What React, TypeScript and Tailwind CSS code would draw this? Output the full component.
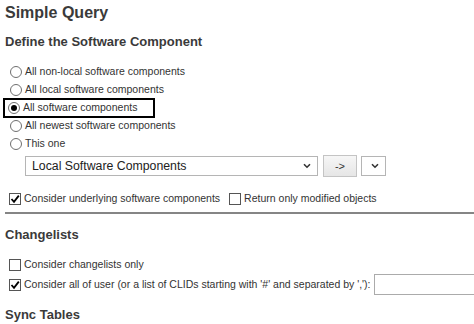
import React from 'react';

const Radio = ({ checked }: { checked?: boolean }) => (
  <span className="flex h-[12px] w-[12px] shrink-0 items-center justify-center rounded-full border border-[#6f6f6f] bg-white">
    {checked && <span className="h-[6px] w-[6px] rounded-full bg-black" />}
  </span>
);

const Checkbox = ({ checked }: { checked?: boolean }) => (
  <span className="flex h-[12px] w-[12px] shrink-0 items-center justify-center border border-[#555] bg-white">
    {checked && (
      <svg width="10" height="10" viewBox="0 0 10 10">
        <path d="M1.5 5 L4 7.8 L8.8 1.6" fill="none" stroke="#000" strokeWidth="1.8" />
      </svg>
    )}
  </span>
);

const Chevron = () => (
  <svg width="8" height="6" viewBox="0 0 8 6">
    <path d="M1 1.2 L4 4.2 L7 1.2" fill="none" stroke="#333" strokeWidth="1.6" />
  </svg>
);

const options = [
  'All non-local software components',
  'All local software components',
  'All software components',
  'All newest software components',
  'This one',
];

export default function App() {
  return (
    <div
      className="w-[474px] h-[324px] overflow-hidden bg-white text-[10.5px] text-[#333] whitespace-nowrap"
      style={{ fontFamily: '"Liberation Sans", Arial, sans-serif' }}
    >
      <div className="px-[5px] pt-[3px]">
        <h1 className="text-[16px] font-bold leading-[20px] text-[#3a3a3a]">Simple Query</h1>
        <h2 className="mt-[11px] text-[13px] font-bold leading-[16px] text-[#3a3a3a]">
          Define the Software Component
        </h2>

        <div className="mt-[13px] flex flex-col">
          {options.map((label, i) =>
            i === 2 ? (
              <div key={label} className="-ml-[2px] -my-[1px] flex h-[20px] w-[152px] items-center gap-[3px] border-2 border-black pl-[3px]">
                <Radio checked />
                <span>{label}</span>
              </div>
            ) : (
              <div key={label} className="flex h-[18px] items-center gap-[3px] pl-[5px]">
                <Radio />
                <span>{label}</span>
              </div>
            )
          )}
        </div>

        <div className="mt-[2px] flex items-center pl-[20px]">
          <div className="flex h-[20px] w-[293px] items-center justify-between border border-[#b5b5b5] pl-[6px] pr-[6px] text-[12.3px] text-[#222]">
            <span>Local Software Components</span>
            <Chevron />
          </div>
          <button className="ml-[5px] flex h-[22px] w-[34px] items-center justify-center border border-[#c4c4c4] bg-gradient-to-b from-[#f6f6f6] to-[#e6e6e6] text-[11px] text-[#333]">
            -&gt;
          </button>
          <div className="ml-[4px] flex h-[20px] w-[25px] items-center justify-center border border-[#b5b5b5] pl-[2px]">
            <Chevron />
          </div>
        </div>

        <div className="mt-[13px] flex h-[18px] items-center pl-[4px]">
          <Checkbox checked />
          <span className="ml-[3px]">Consider underlying software components</span>
          <span className="ml-[9px]">
            <Checkbox />
          </span>
          <span className="ml-[3px]">Return only modified objects</span>
        </div>
      </div>

      <div className="ml-[5px] mt-[4px] h-[2px] bg-[#858585]" />

      <div className="px-[5px]">
        <h2 className="mt-[13px] text-[13px] font-bold leading-[16px] text-[#3a3a3a]">Changelists</h2>

        <div className="mt-[12px] flex h-[19px] items-center pl-[4px]">
          <Checkbox />
          <span className="ml-[3px]">Consider changelists only</span>
        </div>
        <div className="flex h-[21px] items-center pl-[4px]">
          <Checkbox checked />
          <span className="ml-[3px]">
            Consider all of user (or a list of CLIDs starting with '#' and separated by ','):
          </span>
          <input
            type="text"
            className="ml-[3px] h-[21px] w-[150px] shrink-0 border border-[#ababab] bg-white outline-none"
          />
        </div>

        <h2 className="mt-[12px] text-[13px] font-bold leading-[16px] text-[#3a3a3a]">Sync Tables</h2>
      </div>
    </div>
  );
}
